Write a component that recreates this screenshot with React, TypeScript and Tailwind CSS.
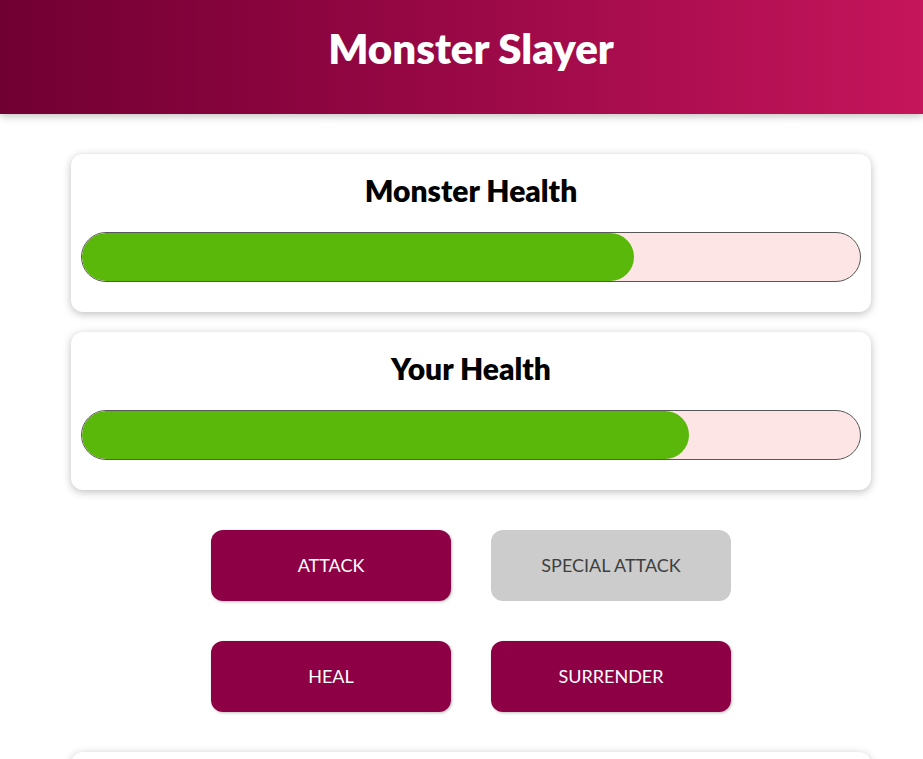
const font = "font-['Lato','Noto_Sans',sans-serif]"

const App: React.FC = () => {
    return (
        <div className={`min-h-screen bg-white overflow-hidden ${font}`}>
            {/* Header */}
            <header className="h-[114px] flex items-center justify-center pl-[19px] pb-[18px] bg-gradient-to-r from-[#710032] to-[#c5155b] shadow-[0_2px_8px_rgba(0,0,0,0.26)]">
                <h1 className="text-[42px] leading-[48px] font-extrabold text-white">Monster Slayer</h1>
            </header>

            <main className="flex flex-col items-center pl-[19px] pt-[40px]">
                <div className="flex flex-col gap-[20px] w-[800px]">
                    <HealthCard title="Monster Health" value={71} />
                    <HealthCard title="Your Health" value={78} />
                </div>

                {/* Controls */}
                <div className="grid grid-cols-2 gap-x-[40px] gap-y-[40px] mt-[40px]">
                    <ActionButton label="ATTACK" />
                    <ActionButton label="SPECIAL ATTACK" disabled />
                    <ActionButton label="HEAL" />
                    <ActionButton label="SURRENDER" />
                </div>

                {/* Battle log */}
                <div className="w-[800px] h-[120px] mt-[40px] rounded-[12px] bg-white shadow-[0_2px_8px_rgba(0,0,0,0.26)]"></div>
            </main>
        </div>
    )
}

type HealthCardProps = {
    title: string
    value: number
}

const HealthCard: React.FC<HealthCardProps> = ({ title, value }) => {
    return (
        <section className="rounded-[12px] bg-white p-[10px] shadow-[0_2px_8px_rgba(0,0,0,0.26)]">
            <h2 className="mt-[8px] h-[36px] leading-[36px] text-center text-[30px] font-extrabold text-black">{title}</h2>
            <div className="mt-[24px] mb-[20px] h-[50px] rounded-full border border-[#575757] bg-[#fde5e5] overflow-hidden">
                <div className="h-full rounded-full bg-[#5ab80a]" style={{ width: `${value}%` }}></div>
            </div>
        </section>
    )
}

type ActionButtonProps = {
    label: string
    disabled?: boolean
}

const ActionButton: React.FC<ActionButtonProps> = ({ label, disabled }) => {
    return (
        <button
            disabled={disabled}
            className={
                disabled
                    ? "w-[240px] h-[71px] rounded-[12px] bg-[#cccccc] text-[#3f3f3f] text-[18px]"
                    : "w-[240px] h-[71px] rounded-[12px] bg-[#8e0045] text-white text-[18px] shadow-[1px_1px_3px_rgba(0,0,0,0.26)]"
            }
        >
            {label}
        </button>
    )
}

export default App
